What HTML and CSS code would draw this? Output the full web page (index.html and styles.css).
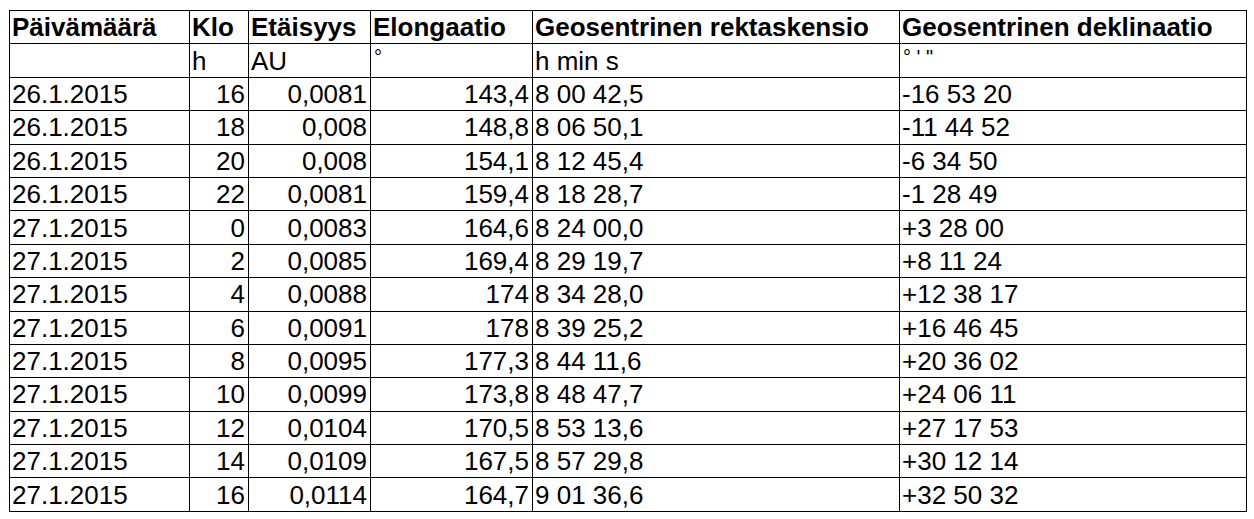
FILE: index.html
```html
<!DOCTYPE html>
<html lang="fi">
<head>
<meta charset="utf-8">
<title>Taulukko</title>
<link rel="stylesheet" href="styles.css">
</head>
<body>
<table class="data">
  <colgroup>
    <col class="c-date">
    <col class="c-klo">
    <col class="c-dist">
    <col class="c-elong">
    <col class="c-ra">
    <col class="c-dec">
  </colgroup>
  <thead>
    <tr class="head">
      <th>Päivämäärä</th>
      <th>Klo</th>
      <th>Etäisyys</th>
      <th>Elongaatio</th>
      <th>Geosentrinen rektaskensio</th>
      <th>Geosentrinen deklinaatio</th>
    </tr>
    <tr class="units">
      <td></td>
      <td>h</td>
      <td>AU</td>
      <td class="small">°</td>
      <td>h min s</td>
      <td class="small">° ' "</td>
    </tr>
  </thead>
  <tbody>
    <tr><td>26.1.2015</td><td class="r">16</td><td class="r">0,0081</td><td class="r">143,4</td><td>8 00 42,5</td><td>-16 53 20</td></tr>
    <tr><td>26.1.2015</td><td class="r">18</td><td class="r">0,008</td><td class="r">148,8</td><td>8 06 50,1</td><td>-11 44 52</td></tr>
    <tr><td>26.1.2015</td><td class="r">20</td><td class="r">0,008</td><td class="r">154,1</td><td>8 12 45,4</td><td>-6 34 50</td></tr>
    <tr><td>26.1.2015</td><td class="r">22</td><td class="r">0,0081</td><td class="r">159,4</td><td>8 18 28,7</td><td>-1 28 49</td></tr>
    <tr><td>27.1.2015</td><td class="r">0</td><td class="r">0,0083</td><td class="r">164,6</td><td>8 24 00,0</td><td>+3 28 00</td></tr>
    <tr><td>27.1.2015</td><td class="r">2</td><td class="r">0,0085</td><td class="r">169,4</td><td>8 29 19,7</td><td>+8 11 24</td></tr>
    <tr><td>27.1.2015</td><td class="r">4</td><td class="r">0,0088</td><td class="r">174</td><td>8 34 28,0</td><td>+12 38 17</td></tr>
    <tr><td>27.1.2015</td><td class="r">6</td><td class="r">0,0091</td><td class="r">178</td><td>8 39 25,2</td><td>+16 46 45</td></tr>
    <tr><td>27.1.2015</td><td class="r">8</td><td class="r">0,0095</td><td class="r">177,3</td><td>8 44 11,6</td><td>+20 36 02</td></tr>
    <tr><td>27.1.2015</td><td class="r">10</td><td class="r">0,0099</td><td class="r">173,8</td><td>8 48 47,7</td><td>+24 06 11</td></tr>
    <tr><td>27.1.2015</td><td class="r">12</td><td class="r">0,0104</td><td class="r">170,5</td><td>8 53 13,6</td><td>+27 17 53</td></tr>
    <tr><td>27.1.2015</td><td class="r">14</td><td class="r">0,0109</td><td class="r">167,5</td><td>8 57 29,8</td><td>+30 12 14</td></tr>
    <tr><td>27.1.2015</td><td class="r">16</td><td class="r">0,0114</td><td class="r">164,7</td><td>9 01 36,6</td><td>+32 50 32</td></tr>
  </tbody>
</table>
</body>
</html>
```
FILE: styles.css
```css
html, body {
  margin: 0;
  background: #ffffff;
}
body {
  padding: 10px 0 0 9px;
  font-family: "Liberation Sans", Arial, sans-serif;
  color: #000;
}
.data {
  border-collapse: collapse;
  table-layout: fixed;
  width: 1237px;
  font-size: 26px;
}
.c-date { width: 180px; }
.c-klo { width: 59px; }
.c-dist { width: 122px; }
.c-elong { width: 162px; }
.c-ra { width: 367px; }
.c-dec { width: 347px; }
.data th,
.data td {
  border: 1px solid #000;
  height: 33.4px;
  padding: 0 3px 0 2px;
  box-sizing: border-box;
  vertical-align: middle;
  text-align: left;
  white-space: nowrap;
  line-height: 28px;
  overflow: hidden;
}
.data th {
  font-weight: bold;
}
.data td.r {
  text-align: right;
}
.data td.small {
  font-size: 20px;
  line-height: 20px;
  vertical-align: top;
  padding-top: 3px;
  padding-left: 3px;
}
```
